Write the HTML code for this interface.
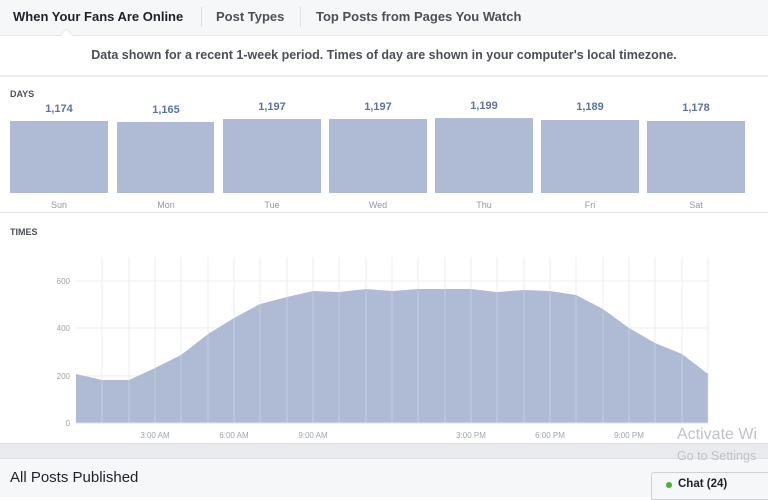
<!DOCTYPE html>
<html><head><meta charset="utf-8"><style>
body{margin:0;width:768px;height:497px;overflow:hidden;background:#fff;font-family:"Liberation Sans",Arial,sans-serif;position:relative}
.a{position:absolute}
.tabs{left:0;top:0;width:768px;height:35px;background:#f6f7f9;border-bottom:1px solid #e5e6e9}
.tab{top:9px;font-size:13px;font-weight:bold;color:#4b4f56}
.sep{top:7px;width:1px;height:20px;background:#dddfe2}
.bar{background:#afbbd4;top:0}
.v{font-size:11px;font-weight:bold;color:#5d73a1;text-align:center;width:98px}
.d{font-size:9px;color:#9197a3;text-align:center;width:98px;top:200px}
.lbl{font-size:9px;font-weight:bold;color:#4b4f56}
.ax{font-size:8px;color:#a0a4ab}
</style></head><body>
<div class="a tabs"></div>
<div class="a tab" style="left:13px;color:#1d2129">When Your Fans Are Online</div>
<div class="a sep" style="left:201px"></div>
<div class="a tab" style="left:216px">Post Types</div>
<div class="a sep" style="left:300px"></div>
<div class="a tab" style="left:316px">Top Posts from Pages You Watch</div>
<div class="a" style="left:62px;top:30px;width:8px;height:8px;background:#fff;border-left:1px solid #e5e6e9;border-top:1px solid #e5e6e9;transform:rotate(45deg)"></div>
<div class="a" style="left:0;top:48px;width:768px;text-align:center;font-size:12.5px;font-weight:bold;color:#4b4f56">Data shown for a recent 1-week period. Times of day are shown in your computer's local timezone.</div>
<div class="a" style="left:0;top:75px;width:768px;height:2px;background:#eceef1"></div>
<div class="a lbl" style="left:10px;top:89px">DAYS</div>

<div class="a v" style="left:10px;top:103px">1,174</div><div class="a bar" style="left:10px;top:121px;width:98px;height:72px"></div><div class="a d" style="left:10px">Sun</div>
<div class="a v" style="left:117px;top:104px">1,165</div><div class="a bar" style="left:117px;top:122px;width:97px;height:71px"></div><div class="a d" style="left:117px">Mon</div>
<div class="a v" style="left:223px;top:101px">1,197</div><div class="a bar" style="left:223px;top:119px;width:98px;height:74px"></div><div class="a d" style="left:223px">Tue</div>
<div class="a v" style="left:329px;top:101px">1,197</div><div class="a bar" style="left:329px;top:119px;width:98px;height:74px"></div><div class="a d" style="left:329px">Wed</div>
<div class="a v" style="left:435px;top:100px">1,199</div><div class="a bar" style="left:435px;top:118px;width:98px;height:75px"></div><div class="a d" style="left:435px">Thu</div>
<div class="a v" style="left:541px;top:101px">1,189</div><div class="a bar" style="left:541px;top:120px;width:98px;height:73px"></div><div class="a d" style="left:541px">Fri</div>
<div class="a v" style="left:647px;top:102px">1,178</div><div class="a bar" style="left:647px;top:121px;width:98px;height:72px"></div><div class="a d" style="left:647px">Sat</div>

<div class="a" style="left:0;top:212px;width:768px;height:1px;background:#e5e6e9"></div>
<div class="a lbl" style="left:10px;top:227px">TIMES</div>

<svg class="a" style="left:0;top:240px" width="768" height="205">
<g stroke="#ebedf0" stroke-width="1">
<line x1="76" y1="41" x2="708" y2="41"/><line x1="76" y1="88" x2="708" y2="88"/><line x1="76" y1="136" x2="708" y2="136"/>
</g>
<g stroke="#ebedf0" stroke-width="1" id="vg">
<line x1="102" y1="17" x2="102" y2="183"/><line x1="129" y1="17" x2="129" y2="183"/><line x1="155" y1="17" x2="155" y2="183"/><line x1="181" y1="17" x2="181" y2="183"/><line x1="208" y1="17" x2="208" y2="183"/><line x1="234" y1="17" x2="234" y2="183"/><line x1="260" y1="17" x2="260" y2="183"/><line x1="287" y1="17" x2="287" y2="183"/><line x1="313" y1="17" x2="313" y2="183"/><line x1="339" y1="17" x2="339" y2="183"/><line x1="366" y1="17" x2="366" y2="183"/><line x1="392" y1="17" x2="392" y2="183"/><line x1="418" y1="17" x2="418" y2="183"/><line x1="445" y1="17" x2="445" y2="183"/><line x1="471" y1="17" x2="471" y2="183"/><line x1="497" y1="17" x2="497" y2="183"/><line x1="524" y1="17" x2="524" y2="183"/><line x1="550" y1="17" x2="550" y2="183"/><line x1="576" y1="17" x2="576" y2="183"/><line x1="603" y1="17" x2="603" y2="183"/><line x1="629" y1="17" x2="629" y2="183"/><line x1="655" y1="17" x2="655" y2="183"/><line x1="682" y1="17" x2="682" y2="183"/><line x1="708" y1="17" x2="708" y2="183"/>
</g>
<polygon fill="#afbbd4" points="76,134 102,140 129,140 155,128 181,115 208,94 234,78 260,64 287,57 313,51 339,52 366,49 392,51 418,49 445,49 471,49 497,52 524,50 550,51 576,55 603,69 629,88 655,103 682,114 708,134 708,183 76,183"/>
<g stroke="#e5e6e9" opacity=".35"><use href="#vg"/></g>
<line x1="76" y1="183" x2="708" y2="183" stroke="#dddfe2"/>
<text x="70" y="44" class="ax" text-anchor="end" font-family="Liberation Sans" font-size="8" fill="#a0a4ab">600</text>
<text x="70" y="91" text-anchor="end" font-family="Liberation Sans" font-size="8" fill="#a0a4ab">400</text>
<text x="70" y="139" text-anchor="end" font-family="Liberation Sans" font-size="8" fill="#a0a4ab">200</text>
<text x="70" y="186" text-anchor="end" font-family="Liberation Sans" font-size="8" fill="#a0a4ab">0</text>
<g font-family="Liberation Sans" font-size="8" fill="#a0a4ab" text-anchor="middle">
<text x="155" y="198">3:00 AM</text><text x="234" y="198">6:00 AM</text><text x="313" y="198">9:00 AM</text>
<text x="471" y="198">3:00 PM</text><text x="550" y="198">6:00 PM</text><text x="629" y="198">9:00 PM</text>
</g>
</svg>

<div class="a" style="left:0;top:443px;width:768px;height:14px;background:#e9ebee;border-top:1px solid #dddfe2;border-bottom:1px solid #dddfe2"></div>
<div class="a" style="left:0;top:459px;width:768px;height:38px;background:#f6f7f9"></div>
<div class="a" style="left:10px;top:469px;font-size:15px;color:#1d2129">All Posts Published</div>
<div class="a" style="left:677px;top:426px;font-size:16px;color:#c0c2c6">Activate Wi</div>
<div class="a" style="left:677px;top:449px;font-size:12.5px;color:#c0c2c6">Go to Settings</div>
<div class="a" style="left:651px;top:472px;width:120px;height:26px;background:#f6f7f9;border:1px solid #cfd1d5;border-radius:3px 0 0 0"></div>
<div class="a" style="left:666px;top:482px;width:6px;height:6px;border-radius:50%;background:#42b72a"></div>
<div class="a" style="left:678px;top:478px;font-size:11.5px;font-weight:bold;color:#1d2129">Chat (24)</div>
</body></html>
